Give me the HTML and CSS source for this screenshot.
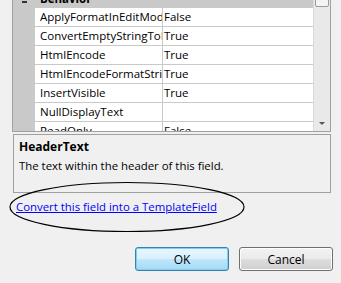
FILE: index.html
```html
<!DOCTYPE html>
<html lang="en">
<head>
  <meta charset="UTF-8">
  <title>Fields</title>
  <link rel="stylesheet" href="styles.css">
</head>
<body>
  <div class="props">
    <div class="grid">
      <div class="rows">
        <div class="cat"><span class="minus"></span>Behavior</div>
        <div class="row"><span class="gut"></span><span class="name">ApplyFormatInEditMode</span><span class="val">False</span></div>
        <div class="row"><span class="gut"></span><span class="name">ConvertEmptyStringToNull</span><span class="val">True</span></div>
        <div class="row"><span class="gut"></span><span class="name">HtmlEncode</span><span class="val">True</span></div>
        <div class="row"><span class="gut"></span><span class="name">HtmlEncodeFormatString</span><span class="val">True</span></div>
        <div class="row"><span class="gut"></span><span class="name">InsertVisible</span><span class="val">True</span></div>
        <div class="row"><span class="gut"></span><span class="name">NullDisplayText</span><span class="val"></span></div>
        <div class="row"><span class="gut"></span><span class="name">ReadOnly</span><span class="val">False</span></div>
      </div>
    </div>
    <div class="scroll">
      <div class="thumb"></div>
      <div class="arrow"></div>
    </div>
  </div>
  <div class="desc">
    <b>HeaderText</b>
    <p>The text within the header of this field.</p>
  </div>
  <div class="linkline">
    <a href="#">Convert this field into a TemplateField</a>
  </div>
  <div class="buttons">
    <button class="btn ok">OK</button>
    <button class="btn">Cancel</button>
  </div>
  <svg class="ring" width="341" height="70" viewBox="0 175 341 70">
    <ellipse cx="127" cy="207" rx="117" ry="24.5" fill="none" stroke="#000" stroke-width="1.2"/>
  </svg>
</body>
</html>
```

FILE: styles.css
```css
body {
  margin: 0;
  width: 341px;
  height: 283px;
  overflow: hidden;
  background: #f0f0f0;
  font-family: "Open Sans", "Noto Sans", sans-serif;
  font-size: 11.5px;
  color: #000;
  position: relative;
}
.props {
  margin-left: 12px;
  width: 317px;
  height: 131px;
  border: 1px solid #a0a0a0;
  border-top: none;
  display: flex;
  overflow: hidden;
}
.grid {
  flex: 1;
  overflow: hidden;
  background: #c9c9c9;
}
.rows {
  margin-top: -10px;
}
.cat {
  height: 18px;
  line-height: 18px;
  font-weight: bold;
  padding-left: 27px;
  position: relative;
}
.minus {
  position: absolute;
  left: 9px;
  top: 11px;
  width: 5px;
  height: 2px;
  background: #333;
}
.row {
  display: flex;
  height: 19px;
}
.gut {
  width: 22px;
  flex: none;
}
.name, .val {
  background: #fff;
  border-bottom: 1px solid #c9c9c9;
  height: 18px;
  line-height: 18px;
  white-space: nowrap;
  overflow: hidden;
}
.name {
  width: 122px;
  flex: none;
  padding-left: 5px;
  border-right: 1px solid #c9c9c9;
}
.val {
  flex: 1;
  padding-left: 1px;
}
.scroll {
  width: 16px;
  flex: none;
  background: #e9e9e9;
  border-left: 1px solid #dadada;
  position: relative;
}
.thumb {
  position: absolute;
  left: 1px;
  top: -4px;
  width: 12px;
  height: 9px;
  border: 1px solid #9a9a9a;
  border-radius: 2px;
  background: #f4f4f4;
}
.arrow {
  position: absolute;
  left: 5px;
  top: 122px;
  width: 0;
  height: 0;
  border-left: 3px solid transparent;
  border-right: 3px solid transparent;
  border-top: 3px solid #555;
}
.desc {
  margin: 2px 0 0 13px;
  height: 57px;
  border: 1px solid #a0a0a0;
  padding: 0 0 0 5px;
  width: 311px;
}
.desc b {
  display: block;
  margin-top: 4px;
  line-height: 16px;
  font-size: 12px;
}
.desc p {
  margin: 3px 0 0;
  line-height: 16px;
  font-size: 11.4px;
}
.linkline {
  margin: 6px 0 0 16px;
  line-height: 16px;
  font-size: 11.4px;
}
.linkline a {
  color: #0000ff;
}
.buttons {
  display: flex;
  justify-content: flex-end;
  gap: 10px;
  margin: 32px 8px 0 0;
}
.btn {
  width: 94px;
  height: 24px;
  border: 1px solid #707070;
  border-radius: 3px;
  font-family: "Open Sans", "Noto Sans", sans-serif;
  font-size: 12px;
  color: #000;
  background: linear-gradient(#f2f2f2 0%, #ebebeb 48%, #dddddd 52%, #cfcfcf 100%);
  box-shadow: inset 0 0 0 1px #fcfcfc;
  padding: 0;
}
.btn.ok {
  border-color: #3c7fb1;
  background: linear-gradient(#eaf6fd 0%, #d9f0fc 48%, #bee6fd 52%, #a7d9f5 100%);
  box-shadow: inset 0 0 0 1px #7ad0f2;
}
.ring {
  position: absolute;
  left: 0;
  top: 175px;
}
```
